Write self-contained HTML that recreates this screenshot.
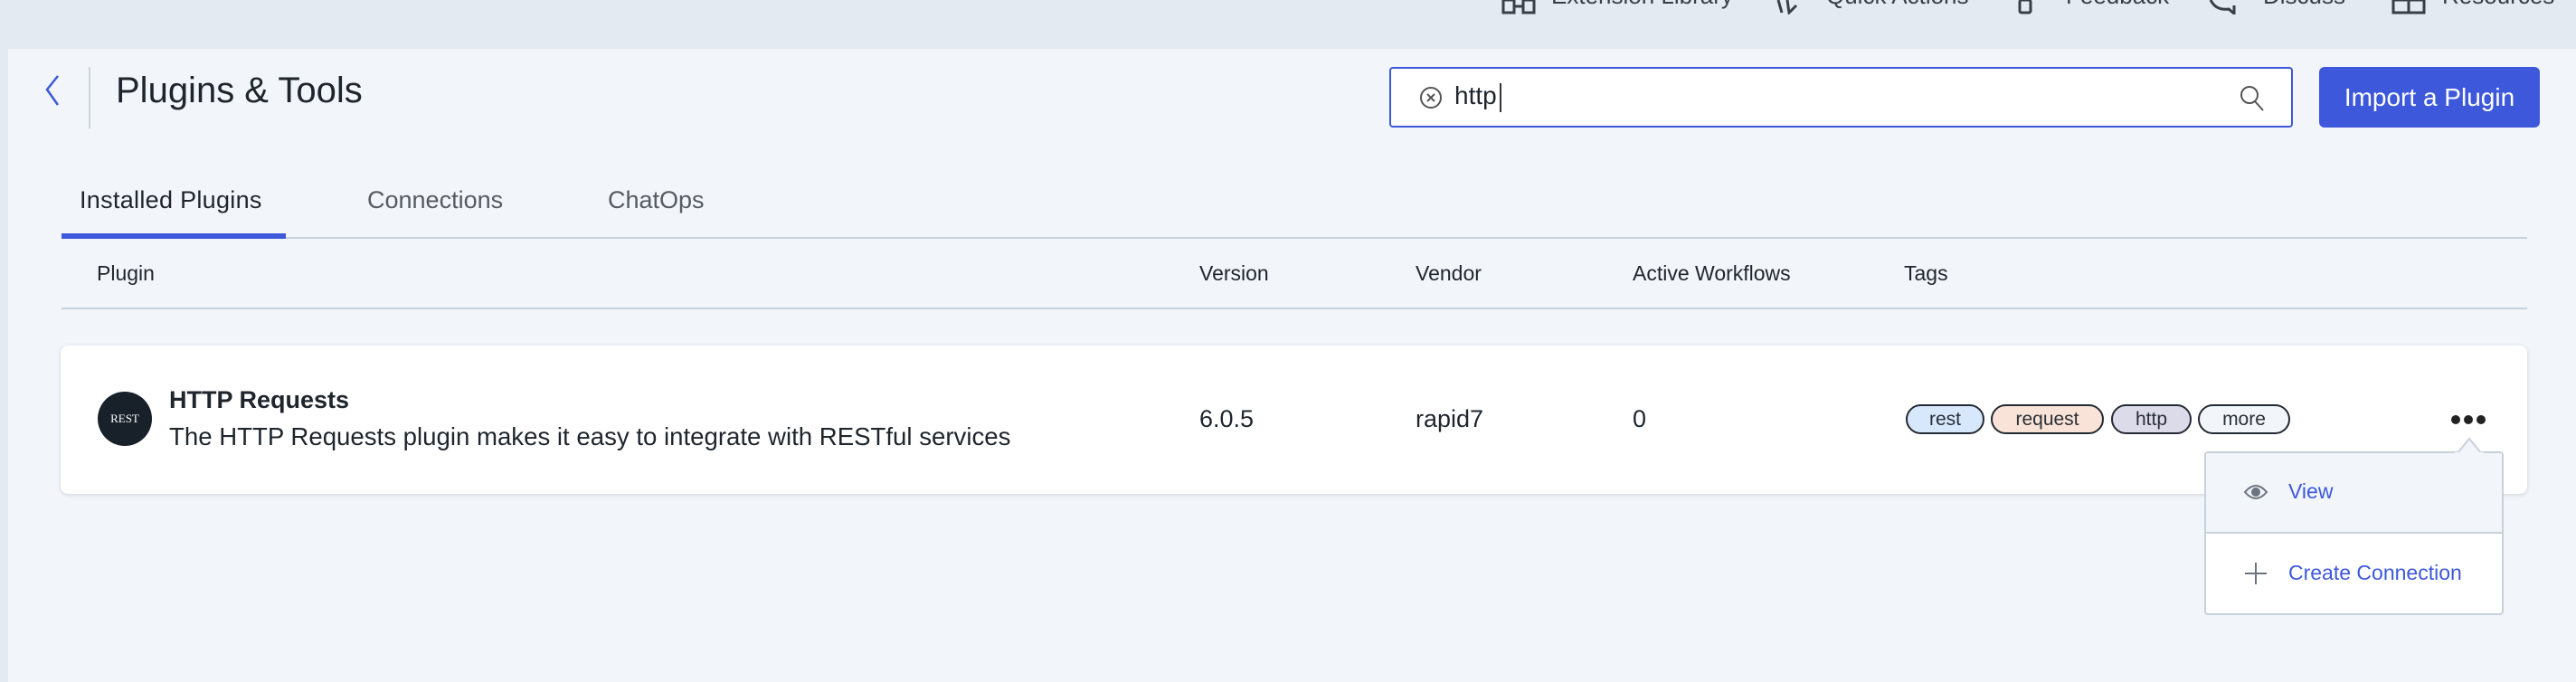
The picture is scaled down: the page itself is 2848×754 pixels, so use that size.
<!DOCTYPE html>
<html><head><meta charset="utf-8"><style>
*{margin:0;padding:0;box-sizing:border-box}
body{width:2848px;height:754px;overflow:hidden;background:#e4eaf2;font-family:"Liberation Sans",sans-serif;color:#1f252d;position:relative}
.a{position:absolute;white-space:nowrap}
.main{position:absolute;left:9px;top:54px;width:2839px;height:700px;background:#f2f5fa}
.nav{font-size:26px;color:#3a3f45;top:-20px}
.th{font-size:23px;color:#1f252d;top:289px}
.tag{position:absolute;top:447px;height:33px;border:2px solid #232a33;border-radius:17px;font-size:21px;line-height:29px;text-align:center;color:#2a3038}
</style></head><body>
<div class="a nav" style="left:1715px">Extension Library</div>
<div class="a nav" style="left:2019px">Quick Actions</div>
<div class="a nav" style="left:2284px">Feedback</div>
<div class="a nav" style="left:2502px">Discuss</div>
<div class="a nav" style="left:2700px">Resources</div>
<svg class="a" style="left:1660px;top:0" width="40" height="16"><rect x="2" y="0" width="12" height="14" fill="none" stroke="#3a3f45" stroke-width="3"/><rect x="24" y="0" width="12" height="14" fill="none" stroke="#3a3f45" stroke-width="3"/><line x1="14" y1="7" x2="24" y2="7" stroke="#3a3f45" stroke-width="3"/></svg>
<svg class="a" style="left:1962px;top:0" width="30" height="16"><path d="M4 0 L8 14 M14 0 L16 14 L24 6" fill="none" stroke="#3a3f45" stroke-width="3"/></svg>
<svg class="a" style="left:2230px;top:0" width="20" height="16"><rect x="3" y="0" width="12" height="14" rx="2" fill="none" stroke="#3a3f45" stroke-width="3"/></svg>
<svg class="a" style="left:2440px;top:0" width="44" height="16"><path d="M4 0 Q10 12 24 10 L30 15 L30 6" fill="none" stroke="#3a3f45" stroke-width="3"/></svg>
<svg class="a" style="left:2644px;top:0" width="40" height="16"><rect x="2" y="0" width="34" height="14" fill="none" stroke="#3a3f45" stroke-width="3"/><line x1="19" y1="0" x2="19" y2="14" stroke="#3a3f45" stroke-width="3"/></svg>
<div class="main"></div>
<svg class="a" style="left:46px;top:80px" width="24" height="40"><path d="M18 4 L6 19 L18 36" fill="none" stroke="#3d58db" stroke-width="2.5"/></svg>
<div class="a" style="left:98px;top:74px;width:2px;height:68px;background:#cdd5df"></div>
<div class="a" style="left:128px;top:78px;font-size:40px;color:#1f252d">Plugins &amp; Tools</div>
<div class="a" style="left:1536px;top:74px;width:999px;height:67px;background:#fff;border:2px solid #3d58db;border-radius:4px"></div>
<svg class="a" style="left:1568px;top:94px" width="28" height="28"><circle cx="14" cy="14" r="11" fill="none" stroke="#555" stroke-width="2"/><path d="M10 10 L18 18 M18 10 L10 18" stroke="#555" stroke-width="2"/></svg>
<div class="a" style="left:1608px;top:90px;font-size:28px;color:#1f252d">http</div>
<div class="a" style="left:1658px;top:92px;width:2px;height:32px;background:#333"></div>
<svg class="a" style="left:2474px;top:92px" width="34" height="34"><circle cx="13" cy="13" r="9" fill="none" stroke="#555" stroke-width="2"/><path d="M19 20 L28 30" stroke="#555" stroke-width="2"/></svg>
<div class="a" style="left:2564px;top:74px;width:244px;height:67px;background:#3d58db;border-radius:6px;color:#fff;font-size:28px;line-height:67px;text-align:center">Import a Plugin</div>
<div class="a" style="left:88px;top:206px;font-size:27px;color:#1f252d;letter-spacing:0.3px">Installed Plugins</div>
<div class="a" style="left:406px;top:206px;font-size:27px;color:#555b62">Connections</div>
<div class="a" style="left:672px;top:206px;font-size:27px;color:#555b62">ChatOps</div>
<div class="a" style="left:68px;top:262px;width:2726px;height:2px;background:#c9d1da"></div>
<div class="a" style="left:68px;top:258px;width:248px;height:6px;background:#3d58db"></div>
<div class="a th" style="left:107px">Plugin</div>
<div class="a th" style="left:1326px">Version</div>
<div class="a th" style="left:1565px">Vendor</div>
<div class="a th" style="left:1805px">Active Workflows</div>
<div class="a th" style="left:2105px">Tags</div>
<div class="a" style="left:68px;top:340px;width:2726px;height:2px;background:#c9d1da"></div>
<div class="a" style="left:67px;top:382px;width:2727px;height:164px;background:#fff;border-radius:8px;box-shadow:0 1px 4px rgba(0,0,0,.15)"></div>
<div class="a" style="left:108px;top:433px;width:60px;height:60px;border-radius:50%;background:#18202a;color:#fff;font-family:'Liberation Serif',serif;font-size:13px;line-height:60px;text-align:center">REST</div>
<div class="a" style="left:187px;top:427px;font-size:27px;font-weight:bold">HTTP Requests</div>
<div class="a" style="left:187px;top:467px;font-size:27.6px">The HTTP Requests plugin makes it easy to integrate with RESTful services</div>
<div class="a" style="left:1326px;top:448px;font-size:27px">6.0.5</div>
<div class="a" style="left:1565px;top:448px;font-size:27px">rapid7</div>
<div class="a" style="left:1805px;top:448px;font-size:27px">0</div>
<div class="tag" style="left:2107px;width:87px;background:#d8e8fc">rest</div>
<div class="tag" style="left:2201px;width:125px;background:#f9e2d7">request</div>
<div class="tag" style="left:2334px;width:89px;background:#dcdbea">http</div>
<div class="tag" style="left:2430px;width:102px;background:#f2f5fa">more</div>
<svg class="a" style="left:2708px;top:455px" width="44" height="18"><circle cx="7" cy="9" r="5" fill="#222"/><circle cx="21" cy="9" r="5" fill="#222"/><circle cx="35" cy="9" r="5" fill="#222"/></svg>
<div class="a" style="left:2437px;top:499px;width:331px;height:181px;background:#fff;border:2px solid #c9d1da;border-radius:4px;overflow:hidden">
<div style="height:89px;background:#f2f5fa;border-bottom:2px solid #c9d1da"></div></div>
<svg class="a" style="left:2714px;top:483px" width="32" height="20"><path d="M2 19 L16 2 L30 19" fill="#f2f5fa" stroke="#c9d1da" stroke-width="2"/><rect x="0" y="17" width="32" height="4" fill="#f2f5fa"/></svg>
<svg class="a" style="left:2480px;top:532px" width="28" height="24"><path d="M2 12 Q14 -2 26 12 Q14 26 2 12Z" fill="none" stroke="#6b7480" stroke-width="2"/><circle cx="14" cy="12" r="5" fill="#6b7480"/></svg>
<div class="a" style="left:2530px;top:530px;font-size:23px;color:#3d58db">View</div>
<svg class="a" style="left:2480px;top:620px" width="28" height="28"><path d="M14 2 V26 M2 14 H26" stroke="#6b7480" stroke-width="2"/></svg>
<div class="a" style="left:2530px;top:620px;font-size:23px;color:#3d58db">Create Connection</div>
</body></html>
